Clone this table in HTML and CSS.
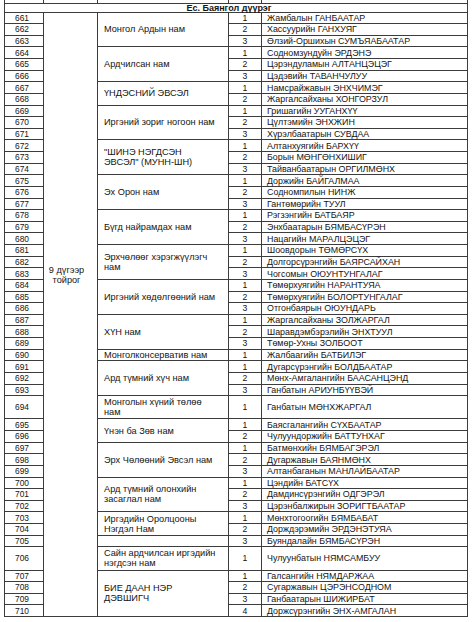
FILE: index.html
```html
<!DOCTYPE html>
<html lang="mn">
<head>
<meta charset="utf-8">
<title>Ес. Баянгол дүүрэг</title>
<link rel="stylesheet" href="styles.css">
</head>
<body>
<div class="sheet">
<table class="list">
<colgroup>
<col class="c-num"><col class="c-dist"><col class="c-party"><col class="c-rank"><col class="c-name">
</colgroup>
<tbody>
<tr class="stub"><td></td><td></td><td></td><td></td><td></td></tr>
<tr class="head"><td colspan="5">Ес. Баянгол дүүрэг</td></tr>
<tr><td class="num">661</td><td class="dist" rowspan="50">9 дүгээр<br>тойрог</td><td class="party" rowspan="3">Монгол Ардын нам</td><td class="rank">1</td><td class="name">Жамбалын ГАНБААТАР</td></tr>
<tr><td class="num">662</td><td class="rank">2</td><td class="name">Хассуурийн ГАНХУЯГ</td></tr>
<tr><td class="num">663</td><td class="rank">3</td><td class="name">Өлзий-Оршихын СУМЪЯАБААТАР</td></tr>
<tr><td class="num">664</td><td class="party" rowspan="3">Ардчилсан нам</td><td class="rank">1</td><td class="name">Содномзундуйн ЭРДЭНЭ</td></tr>
<tr><td class="num">665</td><td class="rank">2</td><td class="name">Цэрэндуламын АЛТАНЦЭЦЭГ</td></tr>
<tr><td class="num">666</td><td class="rank">3</td><td class="name">Цэдэвийн ТАВАНЧУЛУУ</td></tr>
<tr><td class="num">667</td><td class="party" rowspan="2">ҮНДЭСНИЙ ЭВСЭЛ</td><td class="rank">1</td><td class="name">Намсрайжавын ЭНХЧИМЭГ</td></tr>
<tr><td class="num">668</td><td class="rank">2</td><td class="name">Жаргалсайханы ХОНГОРЗУЛ</td></tr>
<tr><td class="num">669</td><td class="party" rowspan="3">Иргэний зориг ногоон нам</td><td class="rank">1</td><td class="name">Гришагийн УУГАНХҮҮ</td></tr>
<tr><td class="num">670</td><td class="rank">2</td><td class="name">Цүлтэмийн ЭНХЖИН</td></tr>
<tr><td class="num">671</td><td class="rank">3</td><td class="name">Хүрэлбаатарын СУВДАА</td></tr>
<tr><td class="num">672</td><td class="party" rowspan="3">"ШИНЭ НЭГДСЭН<br>ЭВСЭЛ" (МУНН-ШН)</td><td class="rank">1</td><td class="name">Алтанхуягийн БАРХҮҮ</td></tr>
<tr><td class="num">673</td><td class="rank">2</td><td class="name">Борын МӨНГӨНХИШИГ</td></tr>
<tr><td class="num">674</td><td class="rank">3</td><td class="name">Тайванбаатарын ОРГИЛМӨНХ</td></tr>
<tr><td class="num">675</td><td class="party" rowspan="3">Эх Орон нам</td><td class="rank">1</td><td class="name">Доржийн БАЙГАЛМАА</td></tr>
<tr><td class="num">676</td><td class="rank">2</td><td class="name">Содномпилын НИНЖ</td></tr>
<tr><td class="num">677</td><td class="rank">3</td><td class="name">Гантөмөрийн ТУУЛ</td></tr>
<tr><td class="num">678</td><td class="party" rowspan="3">Бүгд найрамдах нам</td><td class="rank">1</td><td class="name">Рэгзэнгийн БАТБАЯР</td></tr>
<tr><td class="num">679</td><td class="rank">2</td><td class="name">Энхбаатарын БЯМБАСҮРЭН</td></tr>
<tr><td class="num">680</td><td class="rank">3</td><td class="name">Нацагийн МАРАЛЦЭЦЭГ</td></tr>
<tr><td class="num">681</td><td class="party" rowspan="3">Эрхчөлөөг хэрэгжүүлэгч<br>нам</td><td class="rank">1</td><td class="name">Шоовдорын ТӨМӨРСҮХ</td></tr>
<tr><td class="num">682</td><td class="rank">2</td><td class="name">Долгорсүрэнгийн БАЯРСАЙХАН</td></tr>
<tr><td class="num">683</td><td class="rank">3</td><td class="name">Чогсомын ОЮУНТУНГАЛАГ</td></tr>
<tr><td class="num">684</td><td class="party" rowspan="3">Иргэний хөдөлгөөний нам</td><td class="rank">1</td><td class="name">Төмөрхуягийн НАРАНТУЯА</td></tr>
<tr><td class="num">685</td><td class="rank">2</td><td class="name">Төмөрхуягийн БОЛОРТУНГАЛАГ</td></tr>
<tr><td class="num">686</td><td class="rank">3</td><td class="name">Отгонбаярын ОЮУНДАРЬ</td></tr>
<tr><td class="num">687</td><td class="party" rowspan="3">ХҮН нам</td><td class="rank">1</td><td class="name">Жаргалсайханы ЗОЛЖАРГАЛ</td></tr>
<tr><td class="num">688</td><td class="rank">2</td><td class="name">Шаравдэмбэрэлийн ЭНХТУУЛ</td></tr>
<tr><td class="num">689</td><td class="rank">3</td><td class="name">Төмөр-Ухны ЗОЛБООТ</td></tr>
<tr><td class="num">690</td><td class="party">Монголконсерватив нам</td><td class="rank">1</td><td class="name">Жалбаагийн БАТБИЛЭГ</td></tr>
<tr><td class="num">691</td><td class="party" rowspan="3">Ард түмний хүч нам</td><td class="rank">1</td><td class="name">Дугарсүрэнгийн БОЛДБААТАР</td></tr>
<tr><td class="num">692</td><td class="rank">2</td><td class="name">Мөнх-Амгалангийн БААСАНЦЭНД</td></tr>
<tr><td class="num">693</td><td class="rank">3</td><td class="name">Ганбатын АРИУНБҮҮВЭЙ</td></tr>
<tr class="tall"><td class="num">694</td><td class="party">Монголын хүний төлөө<br>нам</td><td class="rank">1</td><td class="name">Ганбатын МӨНХЖАРГАЛ</td></tr>
<tr><td class="num">695</td><td class="party" rowspan="2">Үнэн ба Зөв нам</td><td class="rank">1</td><td class="name">Баясгалангийн СҮХБААТАР</td></tr>
<tr><td class="num">696</td><td class="rank">2</td><td class="name">Чулуундоржийн БАТТУНХАГ</td></tr>
<tr><td class="num">697</td><td class="party" rowspan="3">Эрх Чөлөөний Эвсэл нам</td><td class="rank">1</td><td class="name">Батмөнхийн БЯМБАГЭРЭЛ</td></tr>
<tr><td class="num">698</td><td class="rank">2</td><td class="name">Дугаржавын БАЯНМӨНХ</td></tr>
<tr><td class="num">699</td><td class="rank">3</td><td class="name">Алтанбаганын МАНЛАЙБААТАР</td></tr>
<tr><td class="num">700</td><td class="party" rowspan="3">Ард түмний олонхийн<br>засаглал нам</td><td class="rank">1</td><td class="name">Цэндийн БАТСҮХ</td></tr>
<tr><td class="num">701</td><td class="rank">2</td><td class="name">Дамдинсүрэнгийн ОДГЭРЭЛ</td></tr>
<tr><td class="num">702</td><td class="rank">3</td><td class="name">Цэрэнбалжирын ЗОРИГТБААТАР</td></tr>
<tr><td class="num">703</td><td class="party" rowspan="2">Иргэдийн Оролцооны<br>Нэгдэл Нам</td><td class="rank">1</td><td class="name">Мөнхтогоогийн БЯМБАБАТ</td></tr>
<tr><td class="num">704</td><td class="rank">2</td><td class="name">Дорждэрэмийн ЭРДЭНЭТУЯА</td></tr>
<tr><td class="num">705</td><td class="party"></td><td class="rank">3</td><td class="name">Буяндалайн БЯМБАСҮРЭН</td></tr>
<tr class="tall"><td class="num">706</td><td class="party">Сайн ардчилсан иргэдийн<br>нэгдсэн нам</td><td class="rank">1</td><td class="name">Чулуунбатын НЯМСАМБУУ</td></tr>
<tr><td class="num">707</td><td class="party" rowspan="4">БИЕ ДААН НЭР<br>ДЭВШИГЧ</td><td class="rank">1</td><td class="name">Галсангийн НЯМДАРЖАА</td></tr>
<tr><td class="num">708</td><td class="rank">2</td><td class="name">Сугаржавын ЦЭРЭНСОДНОМ</td></tr>
<tr><td class="num">709</td><td class="rank">3</td><td class="name">Ганбаатарын ШИЖИРБАТ</td></tr>
<tr><td class="num">710</td><td class="rank">4</td><td class="name">Доржсүрэнгийн ЭНХ-АМГАЛАН</td></tr>
</tbody>
</table>
</div>
</body>
</html>
```
FILE: styles.css
```css
html, body {
  margin: 0;
  padding: 0;
  background: #ffffff;
}

body {
  font-family: "Liberation Sans", Arial, sans-serif;
  color: #141414;
}

.sheet {
  padding: 0 0 0 4px;
}

.list {
  border-collapse: collapse;
  table-layout: fixed;
  width: 463px;
  font-size: 9.2px;
  line-height: 10px;
}

.c-num { width: 39px; }
.c-dist { width: 54px; }
.c-party { width: 131px; }
.c-rank { width: 33px; }
.c-name { width: 206px; }

.list td {
  border: 1px solid #3c3c3c;
  padding: 0;
  height: 11.63px;
  box-sizing: border-box;
  white-space: nowrap;
}

.list .stub td {
  height: 3px;
  border-top: none;
}

.list .head td {
  height: 9px;
  font-weight: bold;
  font-size: 9px;
  line-height: 8px;
  text-align: center;
  padding-right: 14px;
}

.list .tall td {
  height: 23.26px;
}

.list td.num {
  text-align: center;
  padding-right: 4px;
  font-size: 8.4px;
}

.list td.dist {
  text-align: center;
  vertical-align: top;
  padding-top: 252px;
  padding-right: 8px;
}

.list td.party {
  padding-left: 6px;
}

.list td.rank {
  text-align: center;
  font-size: 8.6px;
}

.list td.name {
  padding-left: 5px;
  font-size: 8.9px;
}
```
